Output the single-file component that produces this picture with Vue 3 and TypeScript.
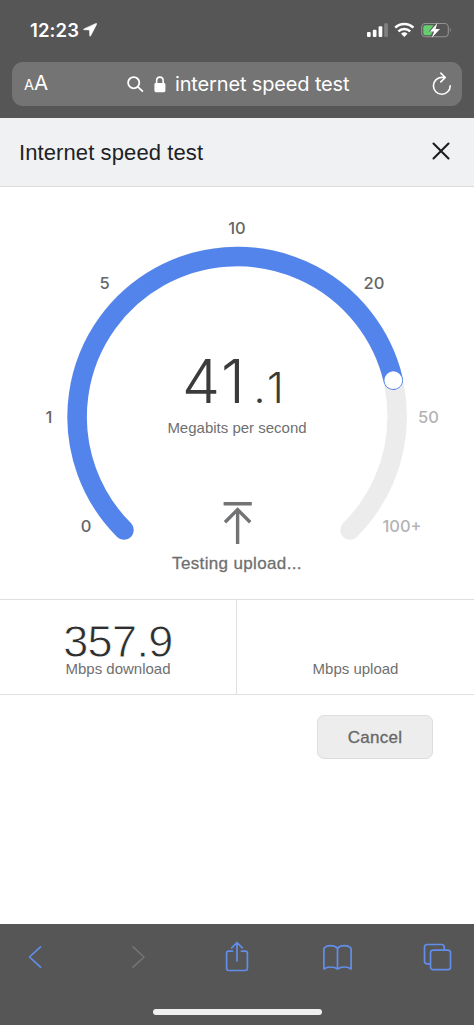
<script setup lang="ts">
interface Tick {
  label: string
  x: number
  y: number
  reached: boolean
}

const ticks: Tick[] = [
  { label: '0', x: 86, y: 344.5, reached: true },
  { label: '1', x: 49, y: 235.5, reached: true },
  { label: '5', x: 104.5, y: 101.5, reached: true },
  { label: '10', x: 237, y: 47, reached: true },
  { label: '20', x: 374, y: 101.5, reached: true },
  { label: '50', x: 428.5, y: 235.5, reached: false },
  { label: '100+', x: 402, y: 344.5, reached: false },
]
</script>

<template>
  <div class="phone">
    <header class="browser">
      <div class="status">
        <span class="time">12:23</span>
        <svg class="location" width="14" height="14" viewBox="0 0 14 14"><path d="M12.900.4.8 5.900q-1 .6.2.8l5.400.300.300 5.700q.2 1.200.9.200L13.700 1.200q.3-1-.8-.8Z" fill="#fff" stroke="#fff" stroke-width=".5" /></svg>
        <svg class="indicators" width="88" height="20" viewBox="0 0 88 20">
          <g fill="#fff">
            <rect x="3" y="12" width="3.7" height="5" rx="1" />
            <rect x="8.8" y="9.8" width="3.7" height="7.2" rx="1" />
            <rect x="14.600" y="6.3" width="3.7" height="10.7" rx="1" />
            <rect x="20.200" y="3.2" width="3.7" height="13.8" rx="1" opacity=".25" />
          </g>
          <g fill="none" stroke="#fff" stroke-width="2.5">
            <path d="M31.200 7.600a13 13 0 0 1 18.200 0" />
            <path d="M34.400 11.300a8.500 8.500 0 0 1 11.800 0" />
          </g>
          <path d="M37.100 13.700a4.700 4.700 0 0 1 6.400 0l-3.200 3.200Z" fill="#fff" />
          <rect x="57.700" y="3.500" width="26.600" height="13.300" rx="3.700" fill="none" stroke="#929292" stroke-width="1.100" />
          <path d="M61.300 5.300h8.500l-5 6.300h4l-2 3.600h-5.500a2 2 0 0 1-2-2V7.300a2 2 0 0 1 2-2Z" fill="#65cf70" />
          <path d="m73.400 3-7.500 8.400h4.200l-2.400 6.400 8.300-8.900h-4.500Z" fill="#fff" />
          <path d="M85.800 7.800q2 2.200 0 4.400Z" fill="#929292" />
        </svg>
      </div>
      <div class="address">
        <span class="reader"><small>A</small>A</span>
        <svg class="search" width="17" height="17" viewBox="0 0 17 17" fill="none" stroke="#fff" stroke-width="1.8" stroke-linecap="round"><circle cx="6.7" cy="6.7" r="5.6" /><path d="m10.9 10.9 4.500 4.200" /></svg>
        <svg class="lock" width="12" height="17" viewBox="0 0 12 17"><rect x=".4" y="7" width="11" height="9.200" rx="1.400" fill="#fff" /><path d="M2.600 8V4.900c0-5 6.600-5 6.600 0V8" fill="none" stroke="#fff" stroke-width="1.600" /></svg>
        <span class="query">internet speed test</span>
        <svg class="reload" width="20" height="24" viewBox="0 0 20 24" fill="none" stroke="#fff" stroke-width="1.6" stroke-linecap="round" stroke-linejoin="round"><path d="M18.200 13.900a8.400 8.400 0 1 1-8.400-8.500h3.300M8.800 1.200l4.500 4.300-4.500 4.400" /></svg>
      </div>
    </header>

    <section class="titlebar">
      <h1>Internet speed test</h1>
      <svg width="18" height="18" viewBox="0 0 18 18" fill="none" stroke="#1c1d1f" stroke-width="2.100" stroke-linecap="round"><path d="m1.500 1.500 15 15m0-15-15 15" /></svg>
    </section>

    <section class="gauge">
      <svg width="474" height="412" viewBox="0 0 474 412">
        <path d="M124 343A160.200 160.200 0 1 1 350 343" fill="none" stroke="#ececec" stroke-width="19.500" stroke-linecap="round" />
        <path d="M124 343A160.200 160.200 0 1 1 393.300 193.200" fill="none" stroke="#5284ec" stroke-width="19.500" stroke-linecap="round" />
        <circle cx="393.300" cy="193.200" r="8.900" fill="#fff" />
        <g class="ticks">
          <text v-for="t in ticks" :key="t.label" :x="t.x" :y="t.y" :class="{ pending: !t.reached }">{{ t.label }}</text>
        </g>
        <text class="whole" x="182 221" y="216">41</text>
        <text class="fraction" x="253.500 267" y="216">.1</text>
        <text class="unit" x="237" y="245.500">Megabits per second</text>
        <path d="M223.600 316.800h28.200M237.600 357v-33.500M225 335.200l12.600-12.600 12.600 12.600" fill="none" stroke="#717375" stroke-width="3.400" />
        <text class="phase" x="237" y="381.500">Testing upload...</text>
      </svg>
    </section>

    <section class="results">
      <div class="result">
        <strong>357.9</strong>
        <span>Mbps download</span>
      </div>
      <div class="result">
        <strong></strong>
        <span>Mbps upload</span>
      </div>
    </section>

    <section class="actions">
      <button type="button">Cancel</button>
    </section>

    <footer class="toolbar">
      <nav>
        <svg width="30" height="32" viewBox="0 0 30 32"><path d="M19.500 5.800 8.500 16l11 10.200" /></svg>
        <svg class="disabled" width="30" height="32" viewBox="0 0 30 32"><path d="m11 5.800 11 10.200-11 10.200" /></svg>
        <svg width="30" height="32" viewBox="0 0 30 32"><path d="M10.500 10.200H6.800q-2.200 0-2.200 2.200v14.900q0 2.200 2.200 2.200h16.400q2.200 0 2.200-2.200V12.400q0-2.200-2.200-2.200h-3.700M15 20V1.500M9.700 6.800 15 1.500l5.300 5.300" /></svg>
        <svg width="30" height="32" viewBox="0 0 30 32"><path d="M14.500 7.300C11 3.700 4 3.900.9 7.300V28c3.600-2.700 10-2.700 13.600 0 3.600-2.700 10-2.700 13.600 0V7.300C25 3.900 18 3.700 14.500 7.300V28" /></svg>
        <svg width="30" height="32" viewBox="0 0 30 32"><path d="M7.300 22.800H4.200q-2.700 0-2.700-2.700V6.200q0-2.700 2.700-2.700h14.300q2.700 0 2.700 2.700v2.900" /><rect x="7.500" y="9.100" width="20" height="19.500" rx="2.700" /></svg>
      </nav>
      <div class="home"></div>
    </footer>
  </div>
</template>

<style>
body {
  margin: 0;
  background: #fff;
}
</style>

<style scoped>
.phone {
  width: 474px;
  height: 1025px;
  display: flex;
  flex-direction: column;
  overflow: hidden;
  background: #fff;
  font-family: "Liberation Sans", Arial, sans-serif;
}
.phone svg {
  display: block;
  flex: none;
}
.browser {
  box-sizing: border-box;
  height: 118px;
  padding: 20px 12px 0;
  background: #565656;
  color: #fff;
  font-family: Inter, sans-serif;
}
.status {
  display: flex;
  align-items: center;
  height: 20px;
  padding: 0 10px 0 18px;
}
.time {
  font-size: 18.5px;
  font-weight: 600;
  line-height: 20px;
  letter-spacing: 0.1px;
}
.location {
  margin-left: 4px;
}
.indicators {
  margin-left: auto;
}
.address {
  box-sizing: border-box;
  display: flex;
  align-items: center;
  height: 44px;
  margin-top: 22px;
  padding: 0 10px 0 12px;
  border-radius: 11px;
  background: #747474;
}
.reader {
  width: 103px;
  font-size: 20.5px;
  line-height: 24px;
}
.reader small {
  font-size: 14.5px;
}
.lock {
  margin-left: 10px;
}
.query {
  margin-left: 9px;
  font-size: 20px;
  line-height: 24px;
  letter-spacing: -0.15px;
  white-space: nowrap;
}
.reload {
  margin-left: auto;
}
.titlebar {
  box-sizing: border-box;
  display: flex;
  align-items: center;
  justify-content: space-between;
  height: 69px;
  padding: 0 24px 0 19px;
  border-bottom: 1px solid #d9dadc;
  background: #f0f1f3;
}
.titlebar svg {
  margin-bottom: 3px;
}
h1 {
  margin: 2px 0 0;
  color: #202124;
  font-size: 22px;
  font-weight: 400;
  letter-spacing: 0.1px;
}
.gauge {
  height: 412px;
}
.gauge text {
  fill: #6f6f6f;
}
.ticks text,
.unit,
.phase {
  text-anchor: middle;
}
.gauge .ticks text {
  font: 450 16.5px Inter, sans-serif;
  fill: #666;
}
.gauge .ticks .pending {
  fill: #b3b3b3;
}
.gauge .whole,
.gauge .fraction {
  font: 300 60.5px Inter, sans-serif;
  fill: #3b3b3b;
}
.gauge .fraction {
  font-size: 42.5px;
}
.unit {
  font-size: 15px;
}
.phase {
  font-size: 17px;
  letter-spacing: 0.35px;
  stroke: #6f6f6f;
  stroke-width: 0.3px;
}
.results {
  box-sizing: border-box;
  display: grid;
  grid-template-columns: 1fr 1fr;
  height: 96px;
  border-top: 1px solid #e0e0e0;
  border-bottom: 1px solid #e0e0e0;
}
.result {
  display: flex;
  flex-direction: column;
  align-items: center;
  padding-top: 20px;
}
.result:first-child {
  border-right: 1px solid #e0e0e0;
}
.result strong {
  height: 40px;
  color: #2e2e2e;
  font-size: 45px;
  font-weight: 400;
  line-height: 43px;
  letter-spacing: -0.6px;
  -webkit-text-stroke: 0.8px #fff;
}
.result span {
  color: #6f6f6f;
  font-size: 15px;
  line-height: 18px;
}
.actions {
  display: flex;
  justify-content: flex-end;
  padding: 20px 41px 0 0;
}
button {
  box-sizing: border-box;
  width: 116px;
  height: 44px;
  padding: 1px 0 0;
  border: 1px solid #ddd;
  border-radius: 7px;
  background: #ededed;
  color: #666;
  font: 400 17px "Liberation Sans", Arial, sans-serif;
  letter-spacing: 0.3px;
  -webkit-text-stroke: 0.3px #666;
}
.toolbar {
  box-sizing: border-box;
  height: 101px;
  margin-top: auto;
  padding: 17px 21px 0;
  background: #565656;
}
nav {
  display: flex;
  justify-content: space-between;
}
nav svg {
  fill: none;
  stroke: #628eea;
  stroke-width: 1.7;
  stroke-linecap: round;
  stroke-linejoin: round;
}
nav .disabled {
  stroke: #747474;
}
.home {
  width: 169px;
  height: 6px;
  margin: 36px auto 0;
  border-radius: 3px;
  background: #f0f0f0;
}
</style>
